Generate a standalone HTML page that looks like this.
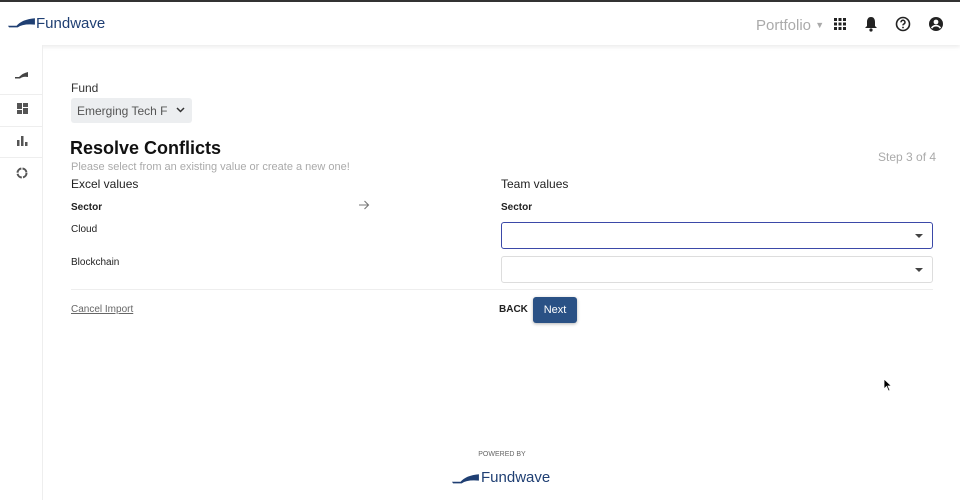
<!DOCTYPE html>
<html><head><style>
*{margin:0;padding:0;box-sizing:border-box}
body{width:960px;height:500px;overflow:hidden;background:#fff;font-family:"Liberation Sans",sans-serif;color:#222;position:relative}
.top{position:absolute;left:0;top:0;width:960px;height:45px;border-top:2px solid #333;background:#fff;box-shadow:0 2px 4px rgba(0,0,0,.08)}
.side{position:absolute;left:0;top:45px;width:43px;height:455px;border-right:1px solid #eee;background:#fff}
.abs{position:absolute}
.logo{font-size:15px;color:#1f3f73}
</style></head><body>
<div class="top">
 <svg class="abs" style="left:8px;top:15px" width="28" height="11" viewBox="0 0 26 10"><path d="M0 8 L8 8 Q13 2 25 1 L25 7 Q14 6 9 9.5 L1 9.5Z" fill="#1f3f73"/></svg>
 <div class="abs logo" style="left:36px;top:13px;font-size:15px">Fundwave</div>
 <div class="abs" style="left:756px;top:15px;font-size:15px;color:#aaa">Portfolio <span style="font-size:9px;position:relative;top:-2px">▼</span></div>
 <svg class="abs" style="left:834px;top:16px" width="12" height="12"><g fill="#222"><rect x="0" y="0" width="3" height="3"/><rect x="4.5" y="0" width="3" height="3"/><rect x="9" y="0" width="3" height="3"/><rect x="0" y="4.5" width="3" height="3"/><rect x="4.5" y="4.5" width="3" height="3"/><rect x="9" y="4.5" width="3" height="3"/><rect x="0" y="9" width="3" height="3"/><rect x="4.5" y="9" width="3" height="3"/><rect x="9" y="9" width="3" height="3"/></g></svg>
 <svg class="abs" style="left:864px;top:14px" width="14" height="16" viewBox="0 0 14 16"><path d="M7 1 C4 1 3 3.5 3 6 L3 10 L1 12 L13 12 L11 10 L11 6 C11 3.5 10 1 7 1Z" fill="#222"/><circle cx="7" cy="14" r="1.6" fill="#222"/></svg>
 <svg class="abs" style="left:895px;top:14px" width="16" height="16" viewBox="0 0 16 16"><circle cx="8" cy="8" r="6.5" fill="none" stroke="#222" stroke-width="1.6"/><path d="M6 6.3a2 2 0 1 1 2.5 1.9c-.4.2-.5.5-.5 1.2" fill="none" stroke="#222" stroke-width="1.5"/><circle cx="8" cy="11.5" r=".9" fill="#222"/></svg>
 <svg class="abs" style="left:928px;top:14px" width="16" height="16" viewBox="0 0 16 16"><circle cx="8" cy="8" r="7" fill="#222"/><circle cx="8" cy="6" r="2.4" fill="#fff"/><path d="M3.6 12.2c1-1.8 2.5-2.5 4.4-2.5s3.4.7 4.4 2.5" fill="none" stroke="#fff" stroke-width="1.6"/></svg>
</div>
<div class="side">
 <svg class="abs" style="left:15px;top:27px" width="14" height="7"><path d="M0 5 L4 5 Q8 1 13 0 L13 5 Q8 4 5 6.5 L0 6.5Z" fill="#444"/></svg>
 <div class="abs" style="left:0;top:49px;width:42px;border-top:1px solid #eee"></div>
 <svg class="abs" style="left:17px;top:58px" width="11" height="11"><g fill="#555"><rect x="0" y="0" width="5" height="6"/><rect x="6" y="0" width="5" height="4"/><rect x="0" y="7" width="5" height="4"/><rect x="6" y="5" width="5" height="6"/></g></svg>
 <div class="abs" style="left:0;top:81px;width:42px;border-top:1px solid #eee"></div>
 <svg class="abs" style="left:17px;top:91px" width="11" height="10"><g fill="#555"><rect x="0" y="4" width="2.5" height="6"/><rect x="4" y="0" width="2.5" height="10"/><rect x="8" y="6" width="2.5" height="4"/></g></svg>
 <div class="abs" style="left:0;top:112px;width:42px;border-top:1px solid #eee"></div>
 <svg class="abs" style="left:16px;top:122px" width="12" height="12"><circle cx="6" cy="6" r="4.5" fill="none" stroke="#555" stroke-width="2" stroke-dasharray="6 1.2"/></svg>
</div>
<div class="abs" style="left:71px;top:81px;font-size:12px;color:#333">Fund</div>
<div class="abs" style="left:71px;top:98px;width:121px;height:25px;background:#eceef0;border-radius:3px;font-size:12px;color:#555;padding:6px 0 0 6px"><div style="width:90px;white-space:nowrap;overflow:hidden">Emerging Tech Fund</div><svg style="position:absolute;right:7px;top:9px" width="9" height="6"><path d="M1 1 L4.5 4.5 L8 1" fill="none" stroke="#333" stroke-width="1.5"/></svg></div>
<div class="abs" style="left:70px;top:138px;font-size:18px;font-weight:bold;color:#111">Resolve Conflicts</div>
<div class="abs" style="left:71px;top:161px;font-size:11px;color:#aaa">Please select from an existing value or create a new one!</div>
<div class="abs" style="left:878px;top:150px;font-size:12px;color:#aaa">Step 3 of 4</div>
<div class="abs" style="left:71px;top:177px;font-size:12px;color:#222">Excel values</div>
<div class="abs" style="left:501px;top:177px;font-size:12px;color:#222">Team values</div>
<div class="abs" style="left:71px;top:202px;font-size:10px;font-weight:bold">Sector</div>
<div class="abs" style="left:501px;top:202px;font-size:10px;font-weight:bold">Sector</div>
<svg class="abs" style="left:359px;top:200px" width="11" height="10"><path d="M0 5 H9.5 M5.5 1 L9.5 5 L5.5 9" fill="none" stroke="#777" stroke-width="1.1"/></svg>
<div class="abs" style="left:71px;top:224px;font-size:10px">Cloud</div>
<div class="abs" style="left:71px;top:257px;font-size:10px">Blockchain</div>
<div class="abs" style="left:501px;top:222px;width:432px;height:27px;border:1.5px solid #3b49a8;border-radius:3px"><svg style="position:absolute;right:9px;top:11px" width="8" height="4"><path d="M0 0 H8 L4 4Z" fill="#444"/></svg></div>
<div class="abs" style="left:501px;top:256px;width:432px;height:27px;border:1px solid #ddd;border-radius:3px"><svg style="position:absolute;right:9px;top:11px" width="8" height="4"><path d="M0 0 H8 L4 4Z" fill="#444"/></svg></div>
<div class="abs" style="left:71px;top:289px;width:862px;border-top:1px solid #eee"></div>
<div class="abs" style="left:71px;top:304px;font-size:10px;color:#666;text-decoration:underline">Cancel Import</div>
<div class="abs" style="left:499px;top:304px;font-size:10px;font-weight:bold">BACK</div>
<div class="abs" style="left:533px;top:297px;width:44px;height:26px;background:#2a5185;border-radius:3px;color:#fff;font-size:11px;text-align:center;line-height:26px;box-shadow:0 1px 3px rgba(0,0,0,.3)">Next</div>
<div class="abs" style="left:0;top:451px;width:1004px;text-align:center;font-size:7px;color:#666">POWERED BY</div>
<svg class="abs" style="left:452px;top:473px" width="28" height="11" viewBox="0 0 26 10"><path d="M0 8 L8 8 Q13 2 25 1 L25 7 Q14 6 9 9.5 L1 9.5Z" fill="#1f3f73"/></svg>
<div class="abs logo" style="left:481px;top:469px;font-size:15px">Fundwave</div>
<svg class="abs" style="left:883px;top:378px" width="10" height="14"><path d="M1 1 L1 11 L3.5 8.5 L5.5 13 L7 12.3 L5 8 L8.5 8Z" fill="#000" stroke="#fff" stroke-width=".8"/></svg>
</body></html>
